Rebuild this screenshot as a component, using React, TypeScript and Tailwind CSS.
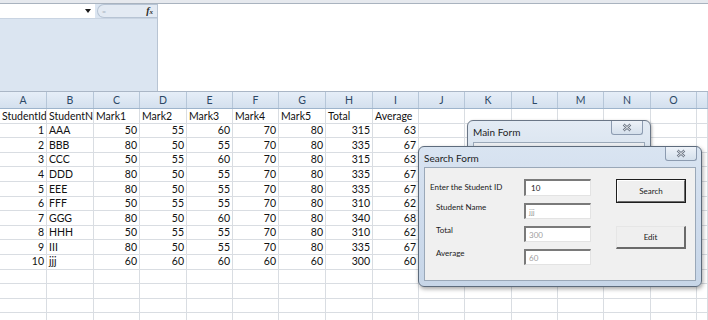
import React from 'react';

const colWidths = [
  'w-[47px]', 'w-[47px]', 'w-[46px]', 'w-[47px]', 'w-[46px]', 'w-[46px]', 'w-[47px]', 'w-[47px]',
  'w-[46px]', 'w-[46px]', 'w-[47px]', 'w-[46px]', 'w-[46px]', 'w-[47px]', 'w-[46px]', 'w-[11px]',
];
const letters = ['A', 'B', 'C', 'D', 'E', 'F', 'G', 'H', 'I', 'J', 'K', 'L', 'M', 'N', 'O', ''];

type Cell = string | number | null;

const rows: Cell[][] = [
  ['StudentId', 'StudentN', 'Mark1', 'Mark2', 'Mark3', 'Mark4', 'Mark5', 'Total', 'Average'],
  [1, 'AAA', 50, 55, 60, 70, 80, 315, 63],
  [2, 'BBB', 80, 50, 55, 70, 80, 335, 67],
  [3, 'CCC', 50, 55, 60, 70, 80, 315, 63],
  [4, 'DDD', 80, 50, 55, 70, 80, 335, 67],
  [5, 'EEE', 80, 50, 55, 70, 80, 335, 67],
  [6, 'FFF', 50, 55, 55, 70, 80, 310, 62],
  [7, 'GGG', 80, 50, 60, 70, 80, 340, 68],
  [8, 'HHH', 50, 55, 55, 70, 80, 310, 62],
  [9, 'III', 80, 50, 55, 70, 80, 335, 67],
  [10, 'jjj', 60, 60, 60, 60, 60, 300, 60],
  [], [], [], [],
];

function CloseButton() {
  return (
    <div className="flex h-[14px] w-[32px] items-center justify-center rounded-b-[3px] border border-t-0 border-[#8c9bb0] bg-gradient-to-b from-[#eef3f9] to-[#d5e0ec]">
      <svg width="10" height="9" viewBox="0 0 10 9">
        <path d="M1.5 1.5 L8.5 7.5 M8.5 1.5 L1.5 7.5" stroke="#6b7584" strokeWidth="2.4" fill="none" />
        <path d="M1.5 1.5 L8.5 7.5 M8.5 1.5 L1.5 7.5" stroke="#f4f6f9" strokeWidth="0.9" fill="none" />
      </svg>
    </div>
  );
}

function TextBox({ value, disabled }: { value: string; disabled?: boolean }) {
  return (
    <div
      className={`flex h-[16px] w-[67px] items-center border-t-2 border-l-2 border-b border-r border-t-[#7a7a7a] border-l-[#7a7a7a] border-b-[#e3e3e3] border-r-[#e3e3e3] bg-white pl-[3px] ${
        disabled ? 'text-[#a0a0a0]' : 'text-black'
      }`}
    >
      {value}
    </div>
  );
}

function SearchForm() {
  const fields = [
    { label: 'Student Name', value: 'jjj' },
    { label: 'Total', value: '300' },
    { label: 'Average', value: '60' },
  ];
  return (
    <div className="absolute left-[418px] top-[146px] flex h-[141px] w-[284px] flex-col rounded-[6px] border border-[#5d6b7c] bg-gradient-to-b from-[#d9e4f1] via-[#cfdced] to-[#c7d6e8] px-[5px] pb-[5px] shadow-[1px_2px_4px_rgba(0,0,0,0.35)]">
      <div className="flex h-[20px] items-start justify-between">
        <span className="pt-[5px] text-[10px] leading-[12px] text-[#1d1d1d]">Search Form</span>
        <div className="-mr-[1px]">
          <CloseButton />
        </div>
      </div>
      <div className="flex flex-1 border border-[#9aa8b8] bg-[#f0f0f0] pl-[5px] pt-[11px] text-[8px] leading-[10px] text-[#1a1a1a]">
        <div className="flex flex-col gap-[7px]">
          <div className="flex items-start">
            <span className="w-[94px] pt-[3px]">Enter the Student ID</span>
            <div className="flex h-[17px] w-[67px] items-center border-t-2 border-l-2 border-b border-r border-t-[#7a7a7a] border-l-[#7a7a7a] border-b-[#e3e3e3] border-r-[#e3e3e3] bg-white pl-[5px]">
              10
            </div>
          </div>
          {fields.map((f) => (
            <div key={f.label} className="flex items-start">
              <span className="-mt-[1px] w-[94px] pl-[6px]">{f.label}</span>
              <TextBox value={f.value} disabled />
            </div>
          ))}
        </div>
        <div className="ml-[25px] flex flex-col gap-[23px]">
          <div className="h-[24px] w-[70px] border border-[#1e1e1e]">
            <div className="flex h-full items-center justify-center border-t border-l border-b border-r border-t-white border-l-white border-b-[#6a6a6a] border-r-[#6a6a6a] bg-[#efefef]">
              Search
            </div>
          </div>
          <div className="flex h-[23px] w-[70px] items-center justify-center border-t border-l border-b-2 border-r-2 border-t-[#e6e6e6] border-l-[#e6e6e6] border-b-[#6a6a6a] border-r-[#6a6a6a] bg-[#efefef]">
            Edit
          </div>
        </div>
      </div>
    </div>
  );
}

function MainForm() {
  return (
    <div className="absolute left-[467px] top-[120px] flex h-[60px] w-[184px] flex-col rounded-t-[6px] border border-[#6a7686] bg-gradient-to-b from-[#e3ebf4] to-[#d2deeb] px-[5px] shadow-[1px_1px_3px_rgba(0,0,0,0.3)]">
      <div className="flex h-[21px] items-start justify-between">
        <span className="pt-[5px] text-[10px] leading-[12px] text-[#1d1d1d]">Main Form</span>
        <div className="mr-[2px]">
          <CloseButton />
        </div>
      </div>
      <div className="flex-1 border border-[#9aa8b8] bg-[#eceef1] pl-[55px] pt-[3px] text-[8px] text-[#b5b9be] blur-[0.6px]">
        Add/Save
      </div>
    </div>
  );
}

export default function App() {
  return (
    <div className="relative h-[320px] w-[708px] overflow-hidden bg-white font-['Lato',sans-serif]">
      {/* formula bar */}
      <div className="h-[4px] border-b border-[#a9b3bf] bg-[#e6e9ee]" />
      <div className="flex h-[88px] border-b border-[#aab6c6]">
        <div className="flex w-[158px] flex-col border-r border-[#b8c4d3] bg-[#dbe5f1]">
          <div className="flex h-[15px] border-b border-[#c9d4e2]">
            <div className="flex w-[95px] items-center justify-end bg-white pr-[4px]">
              <svg width="6" height="4" viewBox="0 0 6 4">
                <path d="M0 0 H6 L3 4 Z" fill="#1a1a1a" />
              </svg>
            </div>
            <div className="ml-[2px] flex flex-1 items-center justify-between rounded-l-full border border-r-0 border-[#b7c4d4] bg-[#e3eaf3] pl-[4px] pr-[4px]">
              <span className="text-[7px] leading-none text-[#a9b4c1]">=</span>
              <span className="font-['Liberation_Serif',serif] text-[10px] font-bold italic leading-none text-[#2a2a2a]">
                f<span className="text-[7px]">x</span>
              </span>
            </div>
          </div>
        </div>
        <div className="flex-1 bg-white" />
      </div>

      {/* column headers */}
      <div className="flex h-[17px] border-b border-[#9eb4cc] bg-gradient-to-b from-[#e6eef8] to-[#d4e0ee] text-[10.5px] text-[#2c4866]">
        {letters.map((l, i) => (
          <div
            key={i}
            className={`${colWidths[i]} flex shrink-0 items-center justify-center border-r border-[#b6c6d8] leading-none`}
          >
            {l}
          </div>
        ))}
      </div>

      {/* data rows */}
      {rows.map((r, ri) => (
        <div key={ri} className="flex h-[14.6px] border-b border-[#d9dde2] text-[10.5px] leading-none text-[#111]">
          {colWidths.map((w, ci) => {
            const v = r[ci];
            const num = typeof v === 'number';
            return (
              <div
                key={ci}
                className={`${w} flex shrink-0 items-center overflow-hidden whitespace-nowrap border-r border-[#d9dde2] px-[2px] ${
                  num ? 'justify-end' : 'justify-start'
                }`}
              >
                {v ?? ''}
              </div>
            );
          })}
        </div>
      ))}

      <MainForm />
      <SearchForm />
    </div>
  );
}
